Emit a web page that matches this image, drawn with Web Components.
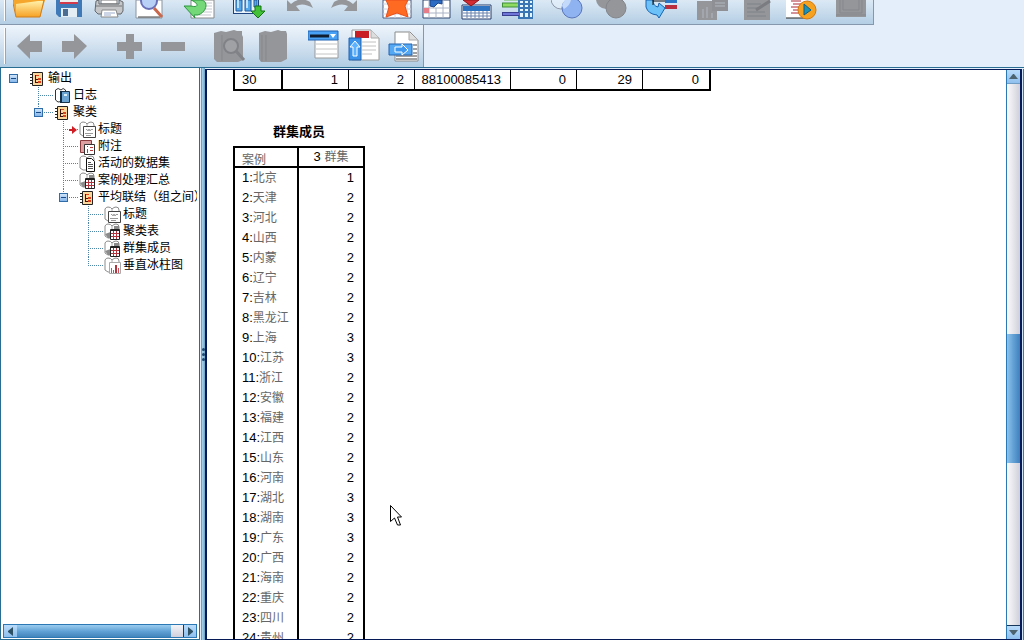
<!DOCTYPE html>
<html lang="zh-CN">
<head>
<meta charset="utf-8">
<title>输出</title>
<style>
    html, body {
        height: 100%;
    }
    body {
        margin: 0;
        overflow: hidden;
        background: #e4eefa;
        font-family: "Liberation Sans", "Noto Sans CJK SC", sans-serif;
    }
</style>
</head>
<body>
<output-viewer></output-viewer>

<script>
const GREY = '#94969a';

// Main toolbar icons use a 32x24 box, outline toolbar icons a 32x42 box.
const ICONS = {
    open: `<path d="M0 0H32L27 17H3Z" fill="#f5a62c"/><path d="M3 4L25 1H31L27 16H3Z" fill="url(#gold)"/><path d="M0 0V3L3 17H27L31 0" fill="none" stroke="#d07c18"/>`,
    save: `<path d="M3 0H29V17H6L3 14Z" fill="#3f79b8"/><path d="M7 0H25V2H7Z" fill="#eee"/><path d="M7 2H25V4H7Z" fill="#d33a4c"/><path d="M8 8H24V17H8Z" fill="#e4edf4"/><path d="M10 9H15V16H10Z" fill="#4b6d93"/>`,
    print: `<path d="M8 0H24V4H8Z" fill="#fff" stroke="#777"/><path d="M3 1L6 0V4H26V0L30 2V11L28 14H5L2 11Z" fill="#c4c6c8" stroke="#65686c"/><path d="M3 6H29" stroke="#777"/><path d="M9 10H23L25 17H8Z" fill="#fff" stroke="#888"/><path d="M11 13H22M11 15H18" stroke="#9ac"/>`,
    preview: `<path d="M3 0H29V18H3Z" fill="#fff" stroke="#8a94a0"/><path d="M5 17H27" stroke="#444"/><circle cx="16" cy="1" r="8" fill="#b9d0f6" stroke="#6a70b8" stroke-width="2"/><path d="M13 0Q14 -5 19 -4V0Z" fill="#e8f0ff"/><path d="M21 8L29 17" stroke="#c8684c" stroke-width="3"/>`,
    recall: `<path d="M8 0H31V18H8Z" fill="#fff" stroke="#8a8a8a"/><path d="M22 3H29M22 6H29M20 9H29M18 12H29M16 15H28" stroke="#c4c8ce"/><path d="M8 0H18C26 1 24 12 15 15H11L12 18L1 6L8 6C15 8 17 4 8 0Z" fill="#74d879" stroke="#2d9440"/>`,
    dialogs: `<path d="M0 0H26V14H0Z" fill="#1d4480"/><path d="M1 0H25V13H1Z" fill="#e8f3fc"/><path d="M3 0H9V11H3ZM12 0H18V11H12ZM21 0H24V7H21Z" fill="#52a8ea" stroke="#23589c"/><path d="M5 0V8M14 0V8" stroke="#bfe2fc" stroke-width="2"/><path d="M22 6H28V11H32L25 18L18 11H22Z" fill="#43c038" stroke="#147215"/>`,
    undo: `<path d="M2 0L6 4Q15 -4 25 2L28 8Q18 2 11 6L15 11H2Z" fill="${GREY}"/>`,
    redo: `<path d="M28 0L24 4Q15 -4 5 2L2 8Q12 2 19 6L15 11H28Z" fill="${GREY}"/>`,
    star: `<path d="M2 0H30V18H2Z" fill="#fff" stroke="#4c5c80"/><path d="M2 4H30M2 9H30M2 14H30M8 0V18M14 0V18M20 0V18M26 0V18" stroke="#ccd2de"/><path d="M5 0H27L24 6L27 17L16 13L5 17L8 7Z" fill="#ff6a22" stroke="#e84e1a"/>`,
    goCase: `<path d="M2 0H29V18H2Z" fill="#fff" stroke="#31466e"/><path d="M2 8H29M2 13H29M8 0V18M15 8V18M22 0V18" stroke="#aab4c6"/><path d="M2 8H8V13H2Z" fill="#e77d88"/><path d="M9 0H21V4L17 3L13 7L9 6Z" fill="#2d6cc4" stroke="#1d448a"/>`,
    goVar: `<path d="M1 5H30V19H1Z" fill="#fff" stroke="#253c6c"/><path d="M2 6H29V11H2Z" fill="#2f74c0"/><path d="M2 13H29M2 16H29M6 11V18M10 11V18M14 11V18M18 11V18M22 11V18M26 11V18" stroke="#6a83ac"/><path d="M2 0H18L10 6Z" fill="#d52c32" stroke="#8e131c"/>`,
    variables: `<path d="M17 0H32V19H17Z" fill="#3976b3"/><path d="M19 1H22V3H19ZM24 1H27V3H24ZM29 1H31V3H29ZM19 5H22V7H19ZM24 5H27V7H24ZM29 5H31V7H29ZM19 9H22V11H19ZM24 9H27V11H24ZM29 9H31V11H29ZM19 13H22V17H19ZM24 13H27V17H24ZM29 13H31V17H29Z" fill="#e6f6ff"/><path d="M1 5H17" stroke="#3f8e36" stroke-width="5"/><path d="M2 5H17" stroke="#8fdb62" stroke-width="3"/><path d="M3 0H17" stroke="#62b34e"/><path d="M1 14H18" stroke="#3b3f90" stroke-width="4"/><path d="M2 14H18" stroke="#7076d8" stroke-width="2"/>`,
    weight: `<circle cx="10" cy="-1" r="10" fill="#e6f1fc" fill-opacity=".6" stroke="#8d99aa"/><circle cx="21" cy="8" r="10" fill="#8fb2f1" stroke="#5a76ba"/><path d="M11 6Q12 -1 20 -3Q21 4 13 9Z" fill="#c4dafb"/>`,
    split: `<circle cx="11" cy="-1" r="10" fill="${GREY}"/><circle cx="21" cy="8" r="10" fill="${GREY}" stroke="#83858a"/>`,
    labels: `<path d="M1 0V7Q3 14 12 15L14 18L20 8L14 3L13 7Q8 6 8 0Z" fill="#6cc1f8" stroke="#1763af"/><path d="M8 0V5M8 1H20" fill="none" stroke="#111"/><path d="M20 1H32" stroke="#2a77c8" stroke-width="4"/><path d="M20 7H32" stroke="#b8303f" stroke-width="4"/>`,
    chart: `<path d="M0 1H20V20H0Z" fill="${GREY}"/><path d="M15 0H31V11H15Z" fill="#8e9095"/><path d="M18 3H28M18 6H28M6 9V18M10 7V18M15 13V18" stroke="#b2b8c0" fill="none"/>`,
    edit: `<path d="M3 0H29V20H3Z" fill="${GREY}"/><path d="M6 4H20M6 8H18M6 12H24M6 16H25" stroke="#7f8287"/><path d="M15 10L29 1" stroke="#7a7c81" stroke-width="3"/>`,
    run: `<path d="M1 0H22V18H1Z" fill="#fff"/><path d="M1 18H20" stroke="#222"/><path d="M6 1H16M8 4H17M6 7H15M8 10H14M6 13H14" stroke="#ae2635" stroke-width="1"/><circle cx="22" cy="10" r="9" fill="#f6a11f" stroke="#d37810"/><path d="M19 4L26 10L19 15Z" fill="#1c93b4" stroke="#145b80"/>`,
    select: `<path d="M1 0H31V17H1Z" fill="${GREY}"/><path d="M5 0V13H27V0M8 0V10H24V0M1 15H31" fill="none" stroke="#85878c"/>`,

    back: `<path d="M3 21L16 9V16H28V27H16V34Z" fill="${GREY}"/>`,
    next: `<path d="M29 21L16 9V16H4V27H16V34Z" fill="${GREY}"/>`,
    plus: `<path d="M12 9H20V17H28V26H20V34H12V26H3V17H12Z" fill="${GREY}"/>`,
    minus: `<path d="M3 17H27V26H3Z" fill="${GREY}"/>`,
    bookFind: `<path d="M0 8L7 6L12 7L20 5L23 6H28V10L29 12V35L24 37H3L0 34Z" fill="${GREY}"/><path d="M8 10V36" stroke="#85878c"/><circle cx="17" cy="21" r="7" fill="#9fa1a5" stroke="#808287" stroke-width="2"/><path d="M22 26L30 35" stroke="#808287" stroke-width="3"/>`,
    book: `<path d="M1 8L7 6L13 7L20 5L23 6H28L29 9V34L23 37H3L1 34Z" fill="${GREY}"/><path d="M8 10V36M4 10V36" stroke="#85878c"/>`,
    header: `<path d="M7 14H30V33H7Z" fill="#fff" stroke="#999"/><path d="M8 19H29M8 24H29M8 29H29" stroke="#c4c4c4"/><path d="M0 6H30V15H0Z" fill="#48a1f4" stroke="#2163b4"/><path d="M2 11H21" stroke="#101c30" stroke-width="3"/><path d="M22 9H28L25 13Z" fill="#fff"/>`,
    promote: `<path d="M4 5H23L31 13V35H4Z" fill="#fff" stroke="#9a9a9a"/><path d="M23 5V13H31" fill="#ddd" stroke="#aaa"/><path d="M14 17H28M14 21H28M14 25H28M14 29H24" stroke="#c0c0c0"/><path d="M7 6H21V13H7Z" fill="#c91f24"/><path d="M1 13H13V35H1Z" fill="#3b93ea" stroke="#2262ae"/><path d="M7 16L12 22H9V31H5V22H2Z" fill="#5cb2ff" stroke="#fff"/>`,
    demote: `<path d="M7 7H22L30 15V36H7Z" fill="#fff" stroke="#8b8b8b"/><path d="M21 7V15H30" fill="#ddd" stroke="#aaa"/><path d="M25 20H29M25 24H29M25 28H29M8 31H29M8 34H29" stroke="#444"/><path d="M1 19H24V30H1Z" fill="#55a8f4" stroke="#2262ae"/><path d="M7 22H14V19L20 25L14 30V27H7Z" fill="#3f97ee" stroke="#fff"/>`
};

// 17x17 outline item icons
const BOOK = `<path d="M1 13V3Q2 1 4 1Q7 1 8 3Q10 1 12 1Q15 1 15 4V13L12 15H4Z" fill="#fff" stroke="#8c8c8c"/><path d="M8 3V13" stroke="#aaa"/>`;
const ITEM_ICONS = {
    root: `<path d="M3.5 2.5H13.5V15.5H3.5Z" fill="#fcd79c" stroke="#222"/><path d="M1 4.5H4M1 7.5H4M1 10.5H4M1 13.5H4" stroke="#222"/><path d="M6.5 5V13M6 5.5H10M7 9.5H9M7 12.5H9" fill="none" stroke="#3a1410"/><path d="M9 8H12V10H9ZM9 11H12V13H9ZM7 5H10V6H7Z" fill="#e0431c"/>`,
    log: `<path d="M1.5 13V3Q4 0 7 3Q9 0 11.5 3V14L4 15Z" fill="#fff" stroke="#333"/><path d="M6.5 4.5H15.5V15.5H6.5Z" fill="#6ba3d2" stroke="#18324a"/><path d="M10 7H13V9H10Z" fill="#d6eefa"/><path d="M7 4V16" stroke="#102c44" stroke-width="2"/>`,
    title: `${BOOK}<path d="M4.5 5.5H16.5V16.5H4.5Z" fill="#fff" stroke="#444"/><path d="M7 8.5H8L9 10L10 8L11 10L12 8.5H14M6 12.5H14M7 14.5H12" fill="none" stroke="#999"/>`,
    notes: `<path d="M1.5 2.5H12.5V14.5H1.5Z" fill="#dba0a1" stroke="#8a3b3e"/><path d="M5.5 6.5H15.5V16.5H5.5Z" fill="#fff" stroke="#333"/><path d="M8.5 8V9M8.5 11V15M11 9.5H14M11 12.5H14" stroke="#b93a3a"/>`,
    data: `${BOOK}<path d="M7.5 3.5H12.5L15.5 6.5V16.5H7.5Z" fill="#fff" stroke="#111"/><path d="M9 7.5H12M9 9.5H14M9 11.5H14M9 13.5H14" stroke="#555"/>`,
    table: `${BOOK}<path d="M1 11L4 15H7V7H10V3H15V6" fill="#8b8b8b"/><path d="M6.5 6.5H15.5V16.5H6.5Z" fill="#fff" stroke="#222"/><path d="M7 7H15V8H7Z" fill="#222"/><path d="M7 10.5H15M7 13.5H15M9.5 8V16M12.5 8V16" stroke="#b3343c"/>`,
    chart: `${BOOK}<path d="M5.5 5.5H16.5V16.5H5.5Z" fill="#fff" stroke="#aaa"/><path d="M7.5 11V16M9.5 13V16M12 8V16M14.5 11V16" stroke="#c9505a" stroke-width="1"/><path d="M12 8V16" stroke="#b3343c" stroke-width="2"/>`
};

class ToolButton extends HTMLElement {
    connectedCallback() {
        const height = this.hasAttribute('tall') ? 42 : 24;
        this.attachShadow({ mode: 'open' });
        this.shadowRoot.innerHTML = `
            <style>
                :host { display: block; flex: none; }
                :host([space="wide"]) { margin-left: 4px; }
                :host([space="section"]) { margin-left: 10px; }
                :host([space="group"]) { margin-left: 12px; }
                :host([space="far"]) { margin-left: 16px; }
                button { display: block; padding: 0; border: 0; background: none; }
                svg { display: block; overflow: hidden; }
            </style>
            <button type="button" aria-label="${this.getAttribute('label')}">
                <svg width="32" height="${height}" viewBox="0 0 32 ${height}">
                    <defs>
                        <linearGradient id="gold" x2="0" y2="1">
                            <stop stop-color="#fff0a8"/><stop offset="1" stop-color="#f8a62c"/>
                        </linearGradient>
                    </defs>
                    ${ICONS[this.getAttribute('icon')]}
                </svg>
            </button>
        `;
    }
}

class ToolBar extends HTMLElement {
    connectedCallback() {
        this.attachShadow({ mode: 'open' });
        this.shadowRoot.innerHTML = `
            <style>
                :host {
                    display: flex;
                    width: fit-content;
                    box-sizing: border-box;
                    gap: 8px;
                    padding: 0 6px 0 4px;
                    border-right: 1px solid #8497ac;
                    background: linear-gradient(#dce9f5, #b4cee4);
                }
                :host([main]) { border-bottom: 1px solid #8497ac; }
                :host([outline]) { padding-right: 3px; background: linear-gradient(#eef5fc, #d5e3f1 45%, #b0cce3); }
                .grip {
                    width: 1px;
                    margin: 3px 0;
                    border-right: 1px solid #8fa9c0;
                    background: #fff;
                }
                :host([main]) .grip { margin-top: 0; margin-right: -1px; }
            </style>
            <span class="grip"></span>
            <slot></slot>
        `;
    }
}

class TreeItem extends HTMLElement {
    connectedCallback() {
        const icon = this.getAttribute('icon');
        const toggle = this.hasAttribute('open') ? '<button type="button" aria-label="折叠"></button>' : '';
        const arrow = this.hasAttribute('current')
            ? '<svg class="arrow" width="8" height="8" viewBox="0 0 8 8"><path d="M0 3H3V0L8 4L3 8V5H0Z" fill="#d21d24"/></svg>' : '';
        this.style.setProperty('--level', this.getAttribute('level'));
        this.attachShadow({ mode: 'open' });
        this.shadowRoot.innerHTML = `
            <style>
                :host {
                    display: flex;
                    align-items: center;
                    height: 17px;
                    padding-left: calc(10px + 25px * var(--level));
                    font-size: 12px;
                    line-height: 17px;
                    white-space: nowrap;
                }
                .branch {
                    flex: none;
                    display: flex;
                    align-items: center;
                    width: 16px;
                    height: 17px;
                    background:
                        repeating-linear-gradient(#4f86a8 0 1px, transparent 1px 2px) 0 0 / 1px 100% no-repeat,
                        repeating-linear-gradient(90deg, #4f86a8 0 1px, transparent 1px 2px) 0 8px / 15px 1px no-repeat;
                }
                :host([last]) .branch { background-size: 1px 9px, 15px 1px; }
                :host([level="0"]) .branch { background: none; }
                button {
                    width: 9px;
                    height: 9px;
                    margin-left: -4px;
                    padding: 0;
                    border: 1px solid #2f6ca8;
                    background:
                        linear-gradient(#174a86, #174a86) 50% 50% / 5px 1px no-repeat,
                        linear-gradient(#cfe4fb, #86b6ea);
                }
                .arrow { margin-left: 6px; }
                .icon { flex: none; margin-right: 2px; }
            </style>
            <span class="branch">${toggle}${arrow}</span>
            <svg class="icon" width="17" height="17" viewBox="0 0 17 17">${ITEM_ICONS[icon]}</svg>
            <slot></slot>
        `;
    }
}

class ScrollBar extends HTMLElement {
    connectedCallback() {
        this.attachShadow({ mode: 'open' });
        this.shadowRoot.innerHTML = `
            <style>
                :host {
                    display: flex;
                    flex: none;
                    box-sizing: border-box;
                    height: 14px;
                    border: 1px solid #2b78b4;
                }
                :host([vertical]) {
                    flex-direction: column;
                    width: 14px;
                    height: auto;
                    border-width: 0 0 0 1px;
                }
                button {
                    flex: none;
                    display: flex;
                    align-items: center;
                    justify-content: center;
                    width: 13px;
                    padding: 0;
                    border: 0;
                    background: linear-gradient(#b9dbfa, #8fc0ee);
                }
                :host([vertical]) button { width: auto; height: 14px; }
                .track { background: linear-gradient(#f4f4f8, #cfd0dc); }
                :host([vertical]) .track { background: linear-gradient(90deg, #fbfbfd, #cfcfda); }
                .before { flex: var(--before) 0 0; }
                .thumb { flex: var(--size) 0 0; background: linear-gradient(#9bccf0, #62a3d6 50%, #4285bd); }
                .after { flex: var(--after) 0 0; }
                :host([vertical]) .thumb { background: linear-gradient(90deg, #8cc3ec, #62a0d4 50%, #3f80bd); }
                :host([vertical]) button:first-of-type { border-bottom: 1px solid #6f9dc4; }
                :host([vertical]) button:last-of-type { border-top: 1px solid #17365c; }
                :host(:not([vertical])) button:last-of-type { border-left: 1px solid #17365c; }
            </style>
            <button type="button" aria-label="向前滚动">${this.arrow(false)}</button>
            <span class="track before"></span>
            <span class="thumb"></span>
            <span class="track after"></span>
            <button type="button" aria-label="向后滚动">${this.arrow(true)}</button>
        `;
    }

    arrow(forward) {
        if (this.hasAttribute('vertical')) {
            return `<svg width="9" height="5" viewBox="0 0 9 5"><path d="${forward ? 'M0 0H9L5 5H4Z' : 'M0 5H9L5 0H4Z'}" fill="#4d6470"/></svg>`;
        }
        return `<svg width="5" height="9" viewBox="0 0 5 9"><path d="${forward ? 'M0 0V9L5 5V4Z' : 'M5 0V9L0 5V4Z'}" fill="#2f5164"/></svg>`;
    }
}

class OutlinePane extends HTMLElement {
    connectedCallback() {
        this.attachShadow({ mode: 'open' });
        this.shadowRoot.innerHTML = `
            <style>
                :host {
                    display: flex;
                    flex: none;
                    flex-direction: column;
                    box-sizing: border-box;
                    width: 200px;
                    padding: 2px 2px 1px;
                    border: 1px solid #2a6d92;
                    border-top: 0;
                    background: #fff;
                }
                .items { flex: 1; min-height: 0; overflow: hidden; }
            </style>
            <div class="items"><slot></slot></div>
            <scroll-bar style="--before: 0; --size: 155; --after: 12"></scroll-bar>
        `;
    }
}

class SplitHandle extends HTMLElement {
    connectedCallback() {
        this.attachShadow({ mode: 'open' });
        this.shadowRoot.innerHTML = `
            <style>
                :host {
                    display: flex;
                    flex: none;
                    flex-direction: column;
                    align-items: center;
                    justify-content: center;
                    gap: 2px;
                    width: 4px;
                    margin-left: 1px;
                    background: linear-gradient(90deg, #4f8eb0, #a5d2ea 40%, #6a9dc6);
                }
                i { width: 3px; height: 3px; border-radius: 2px; background: #1d4870; }
            </style>
            <i></i><i></i><i></i>
        `;
    }
}

class AgglomerationTable extends HTMLElement {
    connectedCallback() {
        this.attachShadow({ mode: 'open' });
        this.shadowRoot.innerHTML = `
            <style>
                :host { display: block; font-size: 13px; line-height: 19px; }
                table { border: 2px solid #000; border-top: 0; border-spacing: 0; }
                th, td {
                    box-sizing: border-box;
                    width: 66px;
                    padding: 0 10px;
                    border-right: 1px solid #000;
                    text-align: right;
                    font-weight: normal;
                }
                th { width: 48px; padding: 0 7px; border-right-width: 2px; text-align: left; }
                td.coefficient { width: 96px; padding: 0 9px 0 5px; }
                td:last-child { border-right: 0; }
            </style>
            <table>
                <tbody>
                    <tr><th scope="row">30</th><td>1</td><td>2</td><td class="coefficient">88100085413</td><td>0</td><td>29</td><td>0</td></tr>
                </tbody>
            </table>
        `;
    }
}

const MEMBERS = [
    ['北京', 1], ['天津', 2], ['河北', 2], ['山西', 2], ['内蒙', 2], ['辽宁', 2],
    ['吉林', 2], ['黑龙江', 2], ['上海', 3], ['江苏', 3], ['浙江', 2], ['安徽', 2],
    ['福建', 2], ['江西', 2], ['山东', 2], ['河南', 2], ['湖北', 3], ['湖南', 3],
    ['广东', 3], ['广西', 2], ['海南', 2], ['重庆', 2], ['四川', 2], ['贵州', 2]
];

class MembershipTable extends HTMLElement {
    connectedCallback() {
        const rows = MEMBERS.map(([name, cluster], i) =>
            `<tr><th scope="row">${i + 1}:<span>${name}</span></th><td>${cluster}</td></tr>`).join('');
        this.attachShadow({ mode: 'open' });
        this.shadowRoot.innerHTML = `
            <style>
                :host { display: block; font-size: 13px; line-height: 20px; }
                table { border: 2px solid #000; border-spacing: 0; }
                caption {
                    padding-bottom: 4px;
                    font-family: "Liberation Serif", "Noto Sans CJK SC", serif;
                    font-weight: bold;
                }
                th, td { box-sizing: border-box; height: 20px; padding: 0 9px; font-weight: normal; }
                th { width: 64px; padding: 0 0 0 7px; border-right: 2px solid #000; text-align: left; white-space: nowrap; }
                td { width: 64px; text-align: right; }
                span { color: #666; font-size: 12px; line-height: 12px; }
                thead th { border-bottom: 2px solid #000; line-height: 18px; }
                thead th:first-child { vertical-align: bottom; line-height: 12px; }
                thead th:last-child { padding: 0; border-right: 0; text-align: center; }
            </style>
            <table>
                <caption>群集成员</caption>
                <thead><tr><th scope="col"><span>案例</span></th><th scope="col">3 <span>群集</span></th></tr></thead>
                <tbody>${rows}</tbody>
            </table>
        `;
    }
}

class OutputPane extends HTMLElement {
    connectedCallback() {
        this.attachShadow({ mode: 'open' });
        this.shadowRoot.innerHTML = `
            <style>
                :host {
                    display: flex;
                    flex: 1;
                    min-width: 0;
                    box-sizing: border-box;
                    margin: 1px 2px 0 0;
                    border: solid #071a58;
                    border-width: 1px 2px;
                    box-shadow: 1px 0 #d3e8fa, 2px 0 #3979ae;
                    background: #fff;
                }
                .page {
                    display: flex;
                    flex: 1;
                    flex-direction: column;
                    gap: 31px;
                    min-width: 0;
                    overflow: hidden;
                    padding-left: 26px;
                }
            </style>
            <div class="page"><slot></slot></div>
            <scroll-bar vertical style="--before: 250; --size: 128; --after: 162"></scroll-bar>
        `;
    }
}

class MousePointer extends HTMLElement {
    connectedCallback() {
        this.attachShadow({ mode: 'open' });
        this.shadowRoot.innerHTML = `
            <style>
                :host { display: block; position: absolute; left: 390px; top: 505px; }
                svg { display: block; }
            </style>
            <svg width="13" height="22" viewBox="0 0 13 22">
                <path d="M.5 .5V16.5L4.5 13L7.5 20H10.5L7.5 12H11.5Z" fill="#fff" stroke="#000"/>
            </svg>
        `;
    }
}

class OutputViewer extends HTMLElement {
    connectedCallback() {
        this.attachShadow({ mode: 'open' });
        this.shadowRoot.innerHTML = `
            <style>
                :host { display: flex; flex-direction: column; height: 100vh; }
                main { display: flex; flex: 1; min-height: 0; border-top: 1px solid #2a6d92; }
            </style>
            <tool-bar main role="toolbar">
                <tool-button icon="open" label="打开"></tool-button>
                <tool-button icon="save" label="保存"></tool-button>
                <tool-button icon="print" label="打印"></tool-button>
                <tool-button icon="preview" label="打印预览"></tool-button>
                <tool-button icon="recall" label="导出" space="section"></tool-button>
                <tool-button icon="dialogs" label="重新调用对话框" space="section"></tool-button>
                <tool-button icon="undo" label="撤消" space="group"></tool-button>
                <tool-button icon="redo" label="重做" space="wide"></tool-button>
                <tool-button icon="star" label="转至数据" space="group"></tool-button>
                <tool-button icon="goCase" label="转至个案"></tool-button>
                <tool-button icon="goVar" label="转至变量"></tool-button>
                <tool-button icon="variables" label="变量"></tool-button>
                <tool-button icon="weight" label="使用变量集" space="section"></tool-button>
                <tool-button icon="split" label="显示所有变量" space="wide"></tool-button>
                <tool-button icon="labels" label="选择上次输出" space="section"></tool-button>
                <tool-button icon="chart" label="关联自动脚本" space="group"></tool-button>
                <tool-button icon="edit" label="创建脚本" space="wide"></tool-button>
                <tool-button icon="run" label="运行脚本" space="wide"></tool-button>
                <tool-button icon="select" label="指定窗口" space="section"></tool-button>
            </tool-bar>
            <tool-bar outline role="toolbar">
                <tool-button tall icon="back" label="升级"></tool-button>
                <tool-button tall icon="next" label="降级" space="wide"></tool-button>
                <tool-button tall icon="plus" label="展开" space="far"></tool-button>
                <tool-button tall icon="minus" label="折叠" space="wide"></tool-button>
                <tool-button tall icon="bookFind" label="显示" space="far"></tool-button>
                <tool-button tall icon="book" label="隐藏" space="wide"></tool-button>
                <tool-button tall icon="header" label="插入标题" space="section"></tool-button>
                <tool-button tall icon="promote" label="插入页面标题"></tool-button>
                <tool-button tall icon="demote" label="插入文本"></tool-button>
            </tool-bar>
            <main>
                <outline-pane>
                    <tree-item level="0" icon="root" open>输出</tree-item>
                    <tree-item level="1" icon="log">日志</tree-item>
                    <tree-item level="1" icon="root" open last>聚类</tree-item>
                    <tree-item level="2" icon="title" current>标题</tree-item>
                    <tree-item level="2" icon="notes">附注</tree-item>
                    <tree-item level="2" icon="data">活动的数据集</tree-item>
                    <tree-item level="2" icon="table">案例处理汇总</tree-item>
                    <tree-item level="2" icon="root" open last>平均联结（组之间）</tree-item>
                    <tree-item level="3" icon="title">标题</tree-item>
                    <tree-item level="3" icon="table">聚类表</tree-item>
                    <tree-item level="3" icon="table">群集成员</tree-item>
                    <tree-item level="3" icon="chart" last>垂直冰柱图</tree-item>
                </outline-pane>
                <split-handle></split-handle>
                <output-pane>
                    <agglomeration-table></agglomeration-table>
                    <membership-table></membership-table>
                </output-pane>
            </main>
            <mouse-pointer></mouse-pointer>
        `;
    }
}

customElements.define('tool-button', ToolButton);
customElements.define('tool-bar', ToolBar);
customElements.define('tree-item', TreeItem);
customElements.define('scroll-bar', ScrollBar);
customElements.define('outline-pane', OutlinePane);
customElements.define('split-handle', SplitHandle);
customElements.define('agglomeration-table', AgglomerationTable);
customElements.define('membership-table', MembershipTable);
customElements.define('output-pane', OutputPane);
customElements.define('mouse-pointer', MousePointer);
customElements.define('output-viewer', OutputViewer);
</script>
</body>
</html>
